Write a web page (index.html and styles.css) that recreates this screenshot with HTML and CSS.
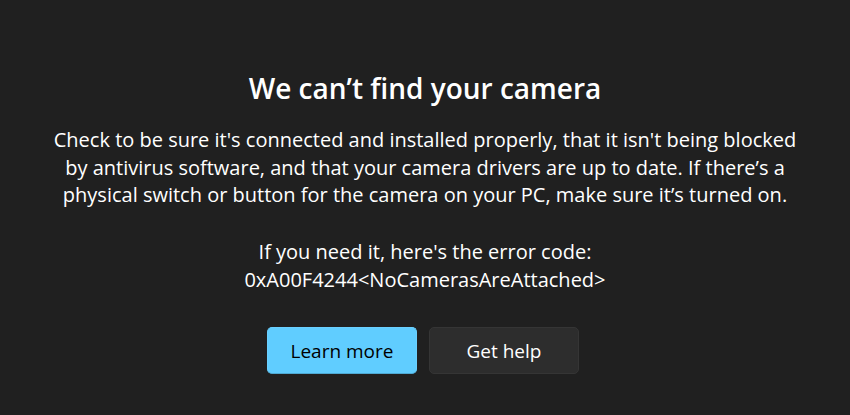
FILE: index.html
```html
<!DOCTYPE html>
<html>
<head>
<meta charset="utf-8">
<link rel="stylesheet" href="styles.css">
</head>
<body>
<main class="page">
  <h1 class="title">We can’t find your camera</h1>
  <p class="desc">Check to be sure it's connected and installed properly, that it isn't being blocked<br>by antivirus software, and that your camera drivers are up to date. If there’s a<br>physical switch or button for the camera on your PC, make sure it’s turned on.</p>
  <p class="code">If you need it, here's the error code:<br>0xA00F4244&lt;NoCamerasAreAttached&gt;</p>
  <div class="actions">
    <button class="btn btn-primary">Learn more</button>
    <button class="btn btn-secondary">Get help</button>
  </div>
</main>
</body>
</html>
```
FILE: styles.css
```css
html, body {
  margin: 0;
  padding: 0;
  background: #202020;
  height: 100%;
}
body {
  font-family: "Open Sans", "Noto Sans", "Liberation Sans", sans-serif;
  color: #ffffff;
}
.page {
  display: flex;
  flex-direction: column;
  align-items: center;
  padding-top: 70px;
}
.title {
  margin: 0;
  font-size: 28px;
  line-height: 36px;
  font-weight: 600;
}
.desc {
  margin: 20px 0 0;
  white-space: nowrap;
  text-align: center;
  font-size: 20px;
  line-height: 27.5px;
}
.code {
  margin: 29.5px 0 0;
  text-align: center;
  font-size: 20px;
  line-height: 27.5px;
}
.actions {
  display: flex;
  gap: 12px;
  margin-top: 34px;
  margin-right: 4px;
}
.btn {
  width: 150px;
  height: 47px;
  border-radius: 5px;
  font-family: inherit;
  font-size: 19px;
  cursor: pointer;
}
.btn-primary {
  background: #60cdff;
  color: #000000;
  border: 1px solid #6ad0ff;
  border-bottom-color: #4fa9d2;
}
.btn-secondary {
  background: #2d2d2d;
  color: #ffffff;
  border: 1px solid #353535;
}
```
